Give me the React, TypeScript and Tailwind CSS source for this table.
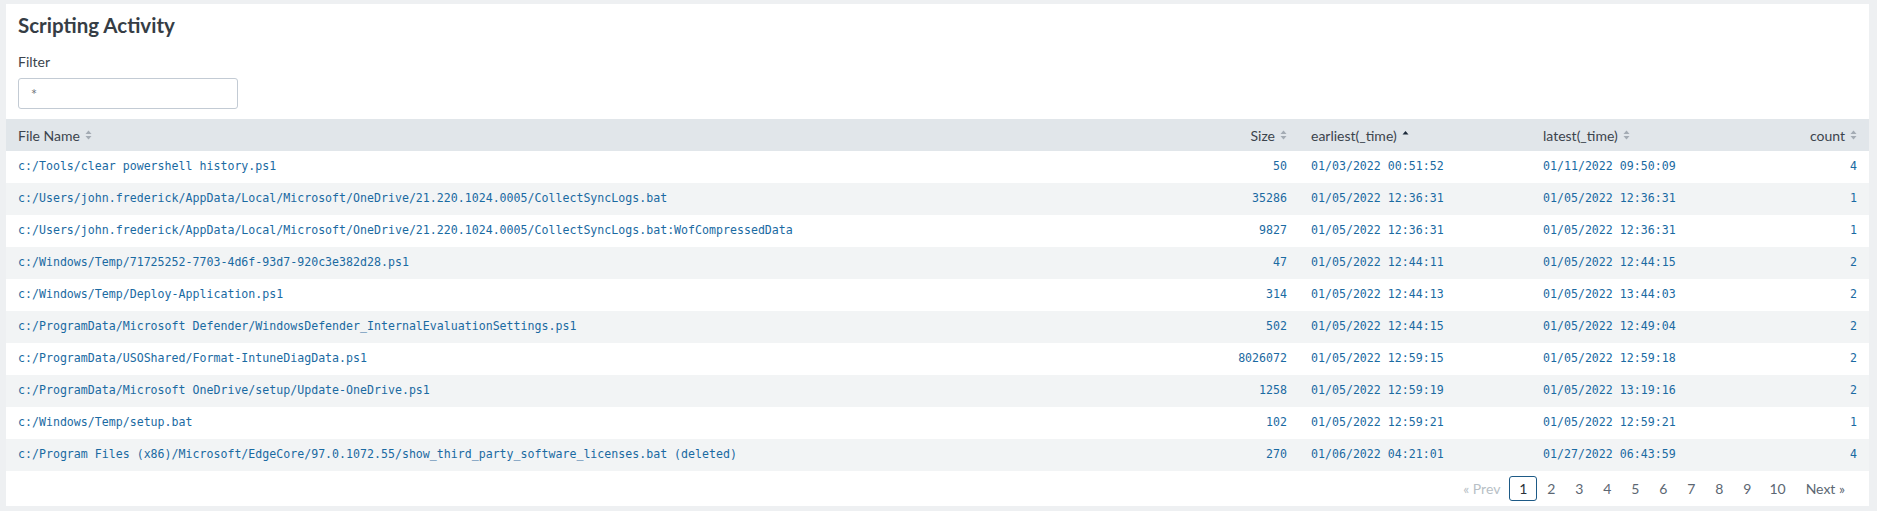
import React from "react";

type Row = {
    file: string;
    size: string;
    earliest: string;
    latest: string;
    count: string;
};

const rows: Row[] = [
    { file: "c:/Tools/clear powershell history.ps1", size: "50", earliest: "01/03/2022 00:51:52", latest: "01/11/2022 09:50:09", count: "4" },
    { file: "c:/Users/john.frederick/AppData/Local/Microsoft/OneDrive/21.220.1024.0005/CollectSyncLogs.bat", size: "35286", earliest: "01/05/2022 12:36:31", latest: "01/05/2022 12:36:31", count: "1" },
    { file: "c:/Users/john.frederick/AppData/Local/Microsoft/OneDrive/21.220.1024.0005/CollectSyncLogs.bat:WofCompressedData", size: "9827", earliest: "01/05/2022 12:36:31", latest: "01/05/2022 12:36:31", count: "1" },
    { file: "c:/Windows/Temp/71725252-7703-4d6f-93d7-920c3e382d28.ps1", size: "47", earliest: "01/05/2022 12:44:11", latest: "01/05/2022 12:44:15", count: "2" },
    { file: "c:/Windows/Temp/Deploy-Application.ps1", size: "314", earliest: "01/05/2022 12:44:13", latest: "01/05/2022 13:44:03", count: "2" },
    { file: "c:/ProgramData/Microsoft Defender/WindowsDefender_InternalEvaluationSettings.ps1", size: "502", earliest: "01/05/2022 12:44:15", latest: "01/05/2022 12:49:04", count: "2" },
    { file: "c:/ProgramData/USOShared/Format-IntuneDiagData.ps1", size: "8026072", earliest: "01/05/2022 12:59:15", latest: "01/05/2022 12:59:18", count: "2" },
    { file: "c:/ProgramData/Microsoft OneDrive/setup/Update-OneDrive.ps1", size: "1258", earliest: "01/05/2022 12:59:19", latest: "01/05/2022 13:19:16", count: "2" },
    { file: "c:/Windows/Temp/setup.bat", size: "102", earliest: "01/05/2022 12:59:21", latest: "01/05/2022 12:59:21", count: "1" },
    { file: "c:/Program Files (x86)/Microsoft/EdgeCore/97.0.1072.55/show_third_party_software_licenses.bat (deleted)", size: "270", earliest: "01/06/2022 04:21:01", latest: "01/27/2022 06:43:59", count: "4" },
];

const cols = "grid grid-cols-[1fr_100px_232px_238px_100px]";

function SortIcon({ active }: { active?: boolean }) {
    if (active) {
        return (
            <svg width="7" height="10" viewBox="0 0 7 10" className="ml-[5px]">
                <path d="M3.5 1 L6.5 4.5 L0.5 4.5 Z" fill="#1c2a3a" />
            </svg>
        );
    }
    return (
        <svg width="7" height="10" viewBox="0 0 7 10" className="ml-[5px]">
            <path d="M3.5 0.5 L6.5 4 L0.5 4 Z" fill="#a3abb3" />
            <path d="M3.5 9.5 L6.5 6 L0.5 6 Z" fill="#a3abb3" />
        </svg>
    );
}

function HeadCell({ label, right, active }: { label: string; right?: boolean; active?: boolean }) {
    return (
        <div className={"flex items-center px-3 " + (right ? "justify-end" : "")}>
            <span>{label}</span>
            <SortIcon active={active} />
        </div>
    );
}

function Pager() {
    const pages = ["1", "2", "3", "4", "5", "6", "7", "8", "9", "10"];
    return (
        <div className="flex h-[35px] items-center justify-end pr-[17px] text-[14px]">
            <span className="mr-[2px] px-[7px] text-[#b8bfc6]">« Prev</span>
            {pages.map((p, i) => (
                <span
                    key={p}
                    className={
                        "flex h-[25px] min-w-[28px] items-center justify-center rounded-[3px] border px-[7px] " +
                        (i === 0 ? "border-[#1d5a86] text-[#2b3138]" : "border-transparent text-[#5c6773]")
                    }
                >
                    {p}
                </span>
            ))}
            <span className="ml-[5px] px-[7px] text-[#5c6773]">Next »</span>
        </div>
    );
}

export default function App() {
    return (
        <div className="min-h-screen bg-[#eef0f2] pb-[5px] pl-[6px] pr-[8px] pt-[4px] font-['Lato',sans-serif]">
            <div className="bg-white">
                <div className="px-3 pt-[9px]">
                    <h2 className="text-[20.5px] font-bold leading-[24px] text-[#363d45]">Scripting Activity</h2>
                    <label className="mt-[16px] block text-[14px] leading-[17px] text-[#3c444d]">Filter</label>
                    <div className="mt-[8px] flex h-[31px] w-[220px] items-center rounded-[3px] border border-[#c3cbd4] bg-white pl-[12px]">
                        <span className="font-['DejaVu_Sans_Mono',monospace] text-[10px] text-[#6b6f78]">*</span>
                    </div>
                </div>
                <div className="mt-[10px]">
                    <div className={cols + " h-[32px] bg-[#e1e6ea] text-[14px] text-[#3c444d]"}>
                        <HeadCell label="File Name" />
                        <HeadCell label="Size" right />
                        <HeadCell label="earliest(_time)" active />
                        <HeadCell label="latest(_time)" />
                        <HeadCell label="count" right />
                    </div>
                    {rows.map((r, i) => (
                        <div
                            key={i}
                            className={
                                cols +
                                " h-[32px] items-center whitespace-pre font-['DejaVu_Sans_Mono',monospace] text-[11.6px] text-[#1a6aa2] " +
                                (i % 2 === 1 ? "bg-[#f2f4f5]" : "bg-white")
                            }
                        >
                            <div className="px-3">{r.file}</div>
                            <div className="px-3 text-right">{r.size}</div>
                            <div className="px-3">{r.earliest}</div>
                            <div className="px-3">{r.latest}</div>
                            <div className="px-3 text-right">{r.count}</div>
                        </div>
                    ))}
                    <Pager />
                </div>
            </div>
        </div>
    );
}
